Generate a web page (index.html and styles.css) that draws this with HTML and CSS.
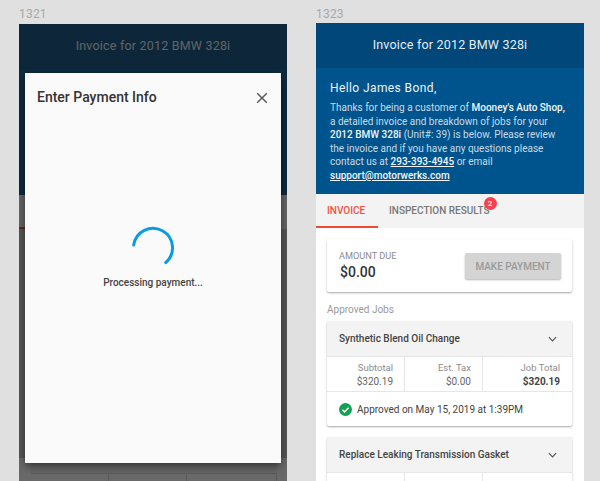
FILE: index.html
```html
<!DOCTYPE html>
<html lang="en">
<head>
    <meta charset="UTF-8">
    <meta name="viewport" content="width=device-width, initial-scale=1.0">
    <title>Invoice for 2012 BMW 328i</title>
    <link rel="stylesheet" href="styles.css">
</head>
<body>
    <div class="artboard">
        <div class="artboard-label">1321</div>
        <div class="screen screen-behind">
            <div class="top-bar">Invoice for 2012 BMW 328i</div>
            <div class="intro"></div>
            <div class="tabs"><span class="tab tab-active"></span></div>
            <div class="content-stub">
                <div class="stub-card">
                    <div class="stub-row"><span></span><span></span><span></span></div>
                </div>
            </div>
            <div class="scrim"></div>
            <div class="modal">
                <div class="modal-head">
                    <h2>Enter Payment Info</h2>
                    <svg class="close-icon" viewBox="0 0 12 12" width="12" height="12">
                        <path d="M1.2 1.2l9.6 9.6M10.8 1.2l-9.6 9.6" fill="none" stroke="#555" stroke-width="1.4"/>
                    </svg>
                </div>
                <div class="modal-body">
                    <svg class="spinner" viewBox="0 0 44 44" width="44" height="44">
                        <path d="M2.7 19A19.5 19.5 0 1 1 34.7 36.6" fill="none" stroke="#0a9be3" stroke-width="3" stroke-linecap="round"/>
                    </svg>
                    <p>Processing payment...</p>
                </div>
            </div>
        </div>
    </div>

    <div class="artboard">
        <div class="artboard-label">1323</div>
        <div class="screen">
            <div class="top-bar">Invoice for 2012 BMW 328i</div>
            <div class="intro">
                <h1>Hello James Bond,</h1>
                <p>Thanks for being a customer of <b>Mooney's Auto Shop,</b><br>
                a detailed invoice and breakdown of jobs for your<br>
                <b>2012 BMW 328i</b> (Unit#: 39) is below. Please review<br>
                the invoice and if you have any questions please<br>
                contact us at <a href="#">293-393-4945</a> or email<br>
                <a href="#">support@motorwerks.com</a></p>
            </div>
            <div class="tabs">
                <span class="tab tab-active">INVOICE</span>
                <span class="tab">INSPECTION RESULTS<span class="badge">2</span></span>
            </div>
            <div class="content">
                <div class="card amount-card">
                    <div>
                        <div class="amount-label">AMOUNT DUE</div>
                        <div class="amount-value">$0.00</div>
                    </div>
                    <button class="btn-pay">MAKE PAYMENT</button>
                </div>
                <div class="section-title">Approved Jobs</div>
                <div class="card job-card">
                    <div class="job-head">
                        <span>Synthetic Blend Oil Change</span>
                        <svg viewBox="0 0 10 6" width="9" height="6"><path d="M1 1l4 4 4-4" fill="none" stroke="#555" stroke-width="1.3"/></svg>
                    </div>
                    <div class="job-totals">
                        <div class="total-cell"><span>Subtotal</span><span class="total-num">$320.19</span></div>
                        <div class="total-cell"><span>Est. Tax</span><span class="total-num">$0.00</span></div>
                        <div class="total-cell"><span>Job Total</span><span class="total-num total-strong">$320.19</span></div>
                    </div>
                    <div class="job-status">
                        <svg viewBox="0 0 13 13" width="13" height="13">
                            <circle cx="6.5" cy="6.5" r="6.5" fill="#12a150"/>
                            <path d="M3.4 6.7l2.2 2.2 4-4.2" fill="none" stroke="#fff" stroke-width="1.5"/>
                        </svg>
                        <span>Approved on May 15, 2019 at 1:39PM</span>
                    </div>
                </div>
                <div class="card job-card">
                    <div class="job-head">
                        <span>Replace Leaking Transmission Gasket</span>
                        <svg viewBox="0 0 10 6" width="9" height="6"><path d="M1 1l4 4 4-4" fill="none" stroke="#555" stroke-width="1.3"/></svg>
                    </div>
                    <div class="job-totals">
                        <div class="total-cell"><span>Subtotal</span></div>
                        <div class="total-cell"><span>Est. Tax</span></div>
                        <div class="total-cell"><span>Job Total</span></div>
                    </div>
                </div>
            </div>
        </div>
    </div>
</body>
</html>
```

FILE: styles.css
```css
body {
    font-family: Roboto, 'Liberation Sans', sans-serif;
    background-color: #e0e0e0;
    margin: 0;
    height: 481px;
    overflow: hidden;
    display: flex;
    gap: 29px;
    padding-left: 19px;
}
.artboard {
    width: 268px;
    flex-shrink: 0;
}
.artboard-label {
    font-size: 12px;
    line-height: 14px;
    height: 23px;
    padding-top: 7px;
    box-sizing: border-box;
    color: #a8a8a8;
    letter-spacing: 0.2px;
}
.screen {
    position: relative;
    height: 458px;
    overflow: hidden;
    background-color: #fff;
}
.screen-behind {
    margin-top: 1px;
}
.top-bar {
    height: 45px;
    background-color: #01477a;
    color: #e3edf3;
    font-size: 12.5px;
    line-height: 43px;
    text-align: center;
    letter-spacing: 0.2px;
}
.intro {
    height: 126px;
    box-sizing: border-box;
    padding: 12px 14px 0;
    background-color: #00548d;
    color: #c9dbe7;
}
.intro h1 {
    margin: 0 0 5px;
    font-size: 12px;
    line-height: 16px;
    font-weight: 400;
    color: #eef4f8;
    letter-spacing: 0.4px;
}
.intro p {
    margin: 0;
    font-size: 10px;
    line-height: 13.6px;
    white-space: nowrap;
}
.intro b {
    color: #f2f6f9;
    font-weight: 500;
}
.intro a {
    color: #f2f6f9;
    font-weight: 500;
}
.tabs {
    height: 34px;
    display: flex;
    background-color: #f3f3f3;
}
.tab {
    position: relative;
    box-sizing: border-box;
    height: 34px;
    padding: 0 11px;
    font-size: 10px;
    font-weight: 500;
    line-height: 34px;
    color: #777;
}
.tab-active {
    width: 62px;
    color: #f0523f;
    border-bottom: 2px solid #ee4b36;
}
.badge {
    position: absolute;
    top: 3px;
    right: 4px;
    width: 13px;
    height: 13px;
    border-radius: 50%;
    background-color: #fb3f4c;
    color: #fff;
    font-size: 8px;
    line-height: 13px;
    text-align: center;
}
.content {
    padding: 11px 12px 0 11px;
}
.card {
    background-color: #fff;
    border-radius: 2px;
    box-shadow: 0 1px 2px rgba(0, 0, 0, 0.35);
}
.amount-card {
    height: 53px;
    box-sizing: border-box;
    padding: 0 11px 0 12px;
    display: flex;
    justify-content: space-between;
    align-items: center;
}
.amount-label {
    font-size: 9.2px;
    line-height: 12px;
    color: #8c8c8c;
}
.amount-value {
    margin: 1px 0 0 1px;
    font-size: 14px;
    line-height: 19px;
    font-weight: 500;
    color: #333;
}
.btn-pay {
    width: 96px;
    height: 26px;
    padding: 1px 0 0;
    border: none;
    border-radius: 2px;
    font-family: inherit;
    font-size: 10px;
    font-weight: 500;
    color: #9a9a9a;
    background-color: #d4d4d4;
    box-shadow: 0 1px 2px rgba(0, 0, 0, 0.3);
}
.section-title {
    margin: 11px 0 5px;
    font-size: 10px;
    line-height: 13px;
    color: #9a9a9a;
}
.job-card {
    margin-bottom: 11px;
}
.job-head {
    height: 35px;
    box-sizing: border-box;
    padding: 0 15px 0 12px;
    display: flex;
    justify-content: space-between;
    align-items: center;
    background-color: #f3f3f3;
    font-size: 10px;
    font-weight: 500;
    color: #444;
}
.job-totals {
    display: grid;
    grid-template-columns: 78px 78px 1fr;
    height: 36px;
    border-bottom: 1px solid #e6e6e6;
    border-top: 1px solid #e6e6e6;
    box-sizing: border-box;
}
.total-cell {
    display: flex;
    flex-direction: column;
    align-items: flex-end;
    justify-content: center;
    padding-right: 11px;
    border-right: 1px solid #e6e6e6;
    font-size: 9.5px;
    line-height: 13px;
    color: #8c8c8c;
}
.total-cell:last-child {
    border-right: none;
    padding-right: 12px;
}
.total-num {
    margin-top: 1px;
    font-size: 10px;
    color: #666;
}
.total-strong {
    font-weight: 700;
    color: #444;
}
.job-status {
    height: 34px;
    box-sizing: border-box;
    padding: 0 12px;
    display: flex;
    align-items: center;
    gap: 5px;
    font-size: 10px;
    color: #444;
}
/* left artboard, everything under the scrim */
.content-stub {
    height: 229px;
    box-sizing: border-box;
    padding: 11px 10px 0 12px;
    background-color: #cbcbcb;
}
.stub-card {
    height: 100%;
    box-sizing: border-box;
    padding-top: 233px;
    background-color: #f3f3f3;
}
.stub-row {
    display: grid;
    grid-template-columns: 78px 78px 1fr;
    height: 20px;
    border-top: 1px solid #d8d8d8;
    background-color: #fff;
}
.stub-row span {
    border-right: 1px solid #d8d8d8;
}
.scrim {
    position: absolute;
    inset: 0;
    background-color: rgba(20, 20, 20, 0.64);
}
.modal {
    position: absolute;
    top: 49px;
    left: 6px;
    width: 256px;
    height: 390px;
    background-color: #fafafa;
    box-shadow: 0 3px 8px rgba(0, 0, 0, 0.5);
    display: flex;
    flex-direction: column;
}
.modal-head {
    display: flex;
    justify-content: space-between;
    align-items: center;
    padding: 16px 13px 0 12px;
}
.modal-head h2 {
    margin: 0;
    font-size: 14px;
    line-height: 17px;
    font-weight: 500;
    color: #333;
}
.close-icon {
    display: block;
}
.modal-body {
    padding-top: 120px;
    text-align: center;
}
.spinner {
    display: block;
    margin: 0 auto;
}
.modal-body p {
    margin: 6px 0 0;
    font-size: 10px;
    line-height: 13px;
    font-weight: 500;
    color: #444;
}
```
